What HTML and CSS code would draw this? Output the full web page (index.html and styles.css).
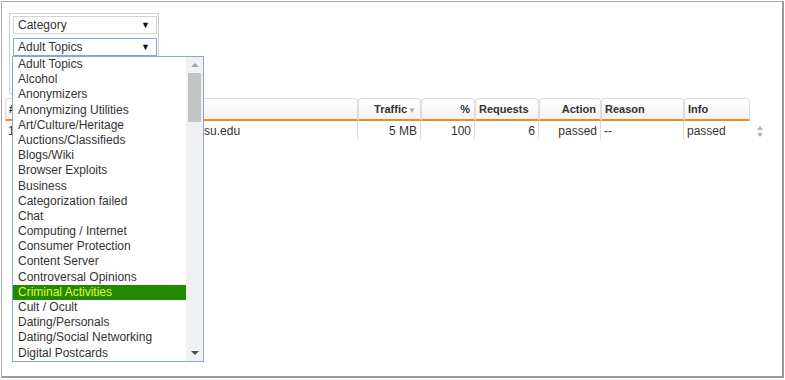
FILE: index.html
```html
<!DOCTYPE html>
<html lang="en">
<head>
    <meta charset="UTF-8">
    <title>Web Filter Statistics</title>
    <link rel="stylesheet" href="styles.css">
</head>
<body>
    <div class="frame">
        <!-- Filter selectors -->
        <div class="filter-panel">
            <div class="fake-select">Category<span class="caret">&#9660;</span></div>
            <div class="fake-select focused">Adult Topics<span class="caret">&#9660;</span></div>
        </div>

        <!-- Open category list -->
        <div class="dropdown">
            <ul class="dropdown-list">
                <li>Adult Topics</li>
                <li>Alcohol</li>
                <li>Anonymizers</li>
                <li>Anonymizing Utilities</li>
                <li>Art/Culture/Heritage</li>
                <li>Auctions/Classifieds</li>
                <li>Blogs/Wiki</li>
                <li>Browser Exploits</li>
                <li>Business</li>
                <li>Categorization failed</li>
                <li>Chat</li>
                <li>Computing / Internet</li>
                <li>Consumer Protection</li>
                <li>Content Server</li>
                <li>Controversal Opinions</li>
                <li class="selected">Criminal Activities</li>
                <li>Cult / Ocult</li>
                <li>Dating/Personals</li>
                <li>Dating/Social Networking</li>
                <li>Digital Postcards</li>
            </ul>
            <div class="scrollbar">
                <span class="arrow-up"></span>
                <span class="thumb"></span>
                <span class="arrow-down"></span>
            </div>
        </div>

        <div class="table-wrap">
            <table class="stats">
                <thead>
                    <tr>
                        <th class="col-num">#</th>
                        <th class="col-host">Host</th>
                        <th class="col-traffic num">Traffic<span class="sort">&#9660;</span></th>
                        <th class="col-pct num">%</th>
                        <th class="col-req">Requests</th>
                        <th class="col-action num">Action</th>
                        <th class="col-reason">Reason</th>
                        <th class="col-info">Info</th>
                    </tr>
                </thead>
                <tbody>
                    <tr>
                        <td>1</td>
                        <td class="host">statistics.webfilter.portal.csu.edu</td>
                        <td class="num">5 MB</td>
                        <td class="num">100</td>
                        <td class="num">6</td>
                        <td class="num">passed</td>
                        <td>--</td>
                        <td>passed</td>
                    </tr>
                </tbody>
            </table>
            <div class="row-sort">
                <span class="up"></span>
                <span class="down"></span>
            </div>
        </div>
    </div>
</body>
</html>
```

FILE: styles.css
```css
body {
    margin: 0;
    padding: 1px 0 0 1px;
    font-family: "Liberation Sans", Arial, sans-serif;
    font-size: 12px;
    color: #333;
    background-color: #fff;
}
.frame {
    position: relative;
    width: 777px;
    height: 363px;
    padding: 11px 0 0 3px;
    border-top: 1px solid #a8a8a8;
    border-left: 1px solid #a8a8a8;
    border-right: 2px solid #9a9a9a;
    border-bottom: 2px solid #9a9a9a;
}
.filter-panel {
    width: 144px;
    height: 77px;
    padding: 2px 1px 0 3px;
    margin-left: 4px;
    border: 1px solid #cfcfcf;
}
.fake-select {
    position: relative;
    height: 16px;
    line-height: 16px;
    padding-left: 4px;
    margin-bottom: 4px;
    border: 1px solid #d4d4d4;
    background-color: #fff;
    color: #333;
}
.fake-select.focused {
    border-color: #7ea6dc;
}
.caret {
    position: absolute;
    right: 6px;
    top: 0;
    font-size: 9px;
    color: #111;
}
.dropdown {
    position: absolute;
    left: 10px;
    top: 54px;
    width: 190px;
    height: 304px;
    display: flex;
    border: 1px solid #85a6d6;
    background-color: #fff;
    z-index: 2;
}
.dropdown-list {
    list-style: none;
    margin: 0;
    padding: 0;
    width: 173px;
}
.dropdown-list li {
    height: 15.2px;
    line-height: 15.2px;
    padding-left: 5px;
    color: #333;
    white-space: nowrap;
}
.dropdown-list li.selected {
    background-color: #218a00;
    color: #e4f83a;
}
.scrollbar {
    position: relative;
    width: 17px;
    background-color: #f1f1f1;
}
.arrow-up, .arrow-down {
    position: absolute;
    left: 5px;
    width: 0;
    height: 0;
    border-left: 4px solid transparent;
    border-right: 4px solid transparent;
}
.arrow-up {
    top: 6px;
    border-bottom: 4px solid #a3a3a3;
}
.arrow-down {
    bottom: 6px;
    border-top: 4px solid #505050;
}
.thumb {
    position: absolute;
    left: 2px;
    top: 16px;
    width: 13px;
    height: 49px;
    background-color: #c4c4c4;
}
.table-wrap {
    display: flex;
    align-items: flex-start;
    margin-top: 4px;
}
.stats {
    border-collapse: separate;
    border-spacing: 0;
    table-layout: fixed;
    width: 745px;
    flex: none;
}
.stats th, .stats td {
    box-sizing: border-box;
}
.stats th {
    height: 23px;
    padding: 0 4px 0 3px;
    font-size: 11px;
    font-weight: bold;
    text-align: left;
    color: #333;
    border: 1px solid #dcdcdc;
    border-bottom: 2px solid #f28a1c;
    border-radius: 4px 4px 0 0;
    background: linear-gradient(#ffffff, #f3f3f3);
    white-space: nowrap;
    overflow: hidden;
}
.stats th.num, .stats td.num {
    text-align: right;
}
.sort {
    font-size: 8px;
    color: #aaa;
    margin-left: 1px;
}
.col-num { width: 17px; }
.col-host { width: 336px; }
.col-traffic { width: 63px; }
.col-pct { width: 54px; }
.col-req { width: 64px; }
.col-action { width: 62px; }
.col-reason { width: 83px; }
.col-info { width: 66px; }
.stats td {
    height: 19px;
    padding: 1px 3px 0 3px;
    border-right: 1px solid #dcdcdc;
    white-space: nowrap;
    overflow: hidden;
}
.stats td:first-child {
    border-right: none;
}
.stats td.host {
    padding-left: 46px;
}
.stats td:last-child {
    border-right: none;
}
.row-sort {
    position: relative;
    width: 8px;
    height: 12px;
    margin: 28px 0 0 7px;
}
.row-sort .up, .row-sort .down {
    position: absolute;
    left: 0;
    width: 0;
    height: 0;
    border-left: 3px solid transparent;
    border-right: 3px solid transparent;
}
.row-sort .up {
    top: 0;
    border-bottom: 4px solid #b5b5b5;
}
.row-sort .down {
    top: 7px;
    border-top: 4px solid #b5b5b5;
}
```
